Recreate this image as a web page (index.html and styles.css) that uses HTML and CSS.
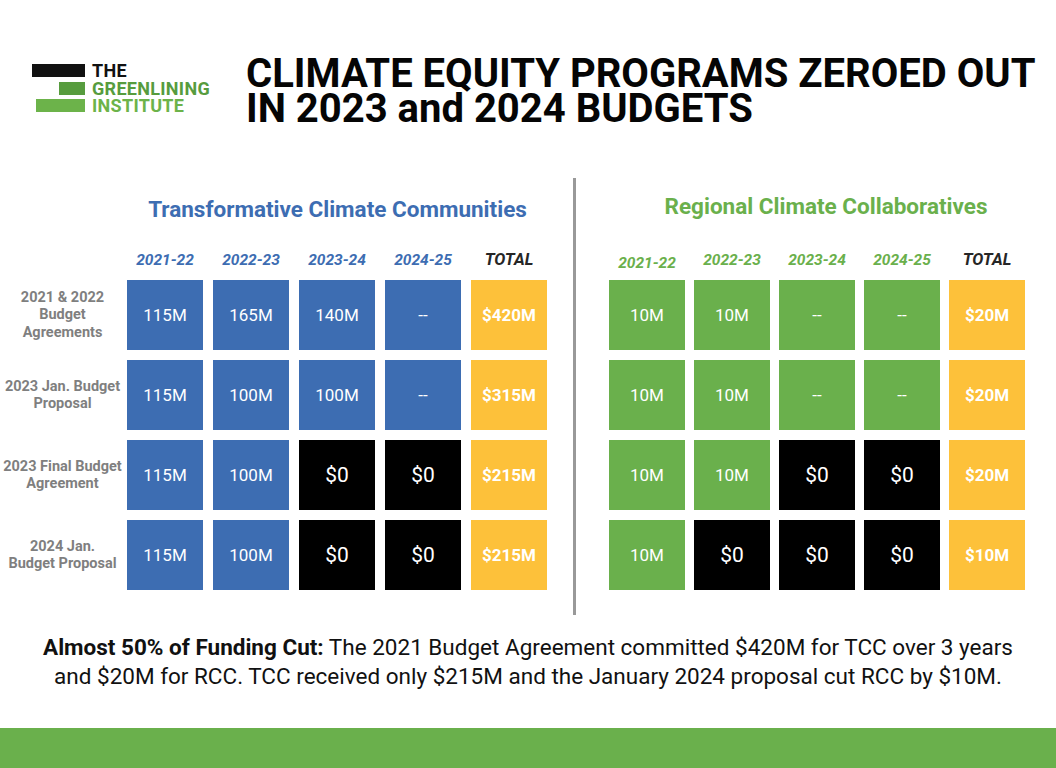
FILE: index.html
```html
<!DOCTYPE html>
<html lang="en">
<head>
<meta charset="utf-8">
<title>Climate Equity Programs Zeroed Out</title>
<link rel="stylesheet" href="styles.css">
</head>
<body>
<div class="page">
  <header class="top">
    <div class="logo">
      <div class="logo-row"><span class="logo-bar-slot"><span class="logo-bar bar-black"></span></span><span class="logo-text t-black">THE</span></div>
      <div class="logo-row"><span class="logo-bar-slot"><span class="logo-bar bar-dark"></span></span><span class="logo-text t-dark">GREENLINING</span></div>
      <div class="logo-row"><span class="logo-bar-slot"><span class="logo-bar bar-light"></span></span><span class="logo-text t-light">INSTITUTE</span></div>
    </div>
    <h1 class="title">CLIMATE EQUITY PROGRAMS ZEROED OUT<br>IN 2023 and 2024 BUDGETS</h1>
  </header>

  <main class="panels">
    <section class="panel panel-tcc">
      <h2 class="panel-title title-blue">Transformative Climate Communities</h2>
      <div class="grid grid-tcc">
        <div></div>
        <div class="colhead blue">2021-22</div>
        <div class="colhead blue">2022-23</div>
        <div class="colhead blue">2023-24</div>
        <div class="colhead blue">2024-25</div>
        <div class="colhead total">TOTAL</div>

        <div class="rowlabel">2021 &amp; 2022<br>Budget<br>Agreements</div>
        <div class="cell c-blue">115M</div>
        <div class="cell c-blue">165M</div>
        <div class="cell c-blue">140M</div>
        <div class="cell c-blue">--</div>
        <div class="cell c-yellow">$420M</div>

        <div class="rowlabel">2023 Jan. Budget<br>Proposal</div>
        <div class="cell c-blue">115M</div>
        <div class="cell c-blue">100M</div>
        <div class="cell c-blue">100M</div>
        <div class="cell c-blue">--</div>
        <div class="cell c-yellow">$315M</div>

        <div class="rowlabel">2023 Final Budget<br>Agreement</div>
        <div class="cell c-blue">115M</div>
        <div class="cell c-blue">100M</div>
        <div class="cell c-black">$0</div>
        <div class="cell c-black">$0</div>
        <div class="cell c-yellow">$215M</div>

        <div class="rowlabel">2024 Jan.<br>Budget Proposal</div>
        <div class="cell c-blue">115M</div>
        <div class="cell c-blue">100M</div>
        <div class="cell c-black">$0</div>
        <div class="cell c-black">$0</div>
        <div class="cell c-yellow">$215M</div>
      </div>
    </section>

    <div class="divider"></div>

    <section class="panel panel-rcc">
      <h2 class="panel-title title-green">Regional Climate Collaboratives</h2>
      <div class="grid grid-rcc">
        <div class="colhead green first">2021-22</div>
        <div class="colhead green">2022-23</div>
        <div class="colhead green">2023-24</div>
        <div class="colhead green">2024-25</div>
        <div class="colhead total">TOTAL</div>

        <div class="cell c-green">10M</div>
        <div class="cell c-green">10M</div>
        <div class="cell c-green">--</div>
        <div class="cell c-green">--</div>
        <div class="cell c-yellow">$20M</div>

        <div class="cell c-green">10M</div>
        <div class="cell c-green">10M</div>
        <div class="cell c-green">--</div>
        <div class="cell c-green">--</div>
        <div class="cell c-yellow">$20M</div>

        <div class="cell c-green">10M</div>
        <div class="cell c-green">10M</div>
        <div class="cell c-black">$0</div>
        <div class="cell c-black">$0</div>
        <div class="cell c-yellow">$20M</div>

        <div class="cell c-green">10M</div>
        <div class="cell c-black">$0</div>
        <div class="cell c-black">$0</div>
        <div class="cell c-black">$0</div>
        <div class="cell c-yellow">$10M</div>
      </div>
    </section>
  </main>

  <p class="note"><strong>Almost 50% of Funding Cut:</strong> The 2021 Budget Agreement committed $420M for TCC over 3 years<br>and $20M for RCC. TCC received only $215M and the January 2024 proposal cut RCC by $10M.</p>

  <footer class="footer-bar"></footer>
</div>
</body>
</html>
```

FILE: styles.css
```css
* { box-sizing: border-box; }

html, body {
  margin: 0;
  padding: 0;
  background: #ffffff;
}

body {
  font-family: Roboto, "Liberation Sans", Arial, sans-serif;
  color: #111111;
}

.page {
  width: 1056px;
  height: 768px;
  display: flex;
  flex-direction: column;
  overflow: hidden;
}

/* Header */
.top {
  display: flex;
  align-items: flex-start;
  padding: 56px 0 0 32px;
  height: 178px;
}

.logo {
  margin-top: 8px;
  width: 214px;
  display: flex;
  flex-direction: column;
  row-gap: 4px;
}

.logo-row {
  display: flex;
  align-items: center;
  height: 13.5px;
}

.logo-bar-slot {
  width: 53px;
  display: flex;
  justify-content: flex-end;
}

.logo-bar {
  display: block;
  height: 13px;
}

.bar-black { width: 53px; background: #111111; }
.bar-dark { width: 26px; background: #579c3e; }
.bar-light { width: 49px; background: #6cb34a; }

.logo-text {
  margin-left: 7px;
  font-weight: 700;
  font-size: 18px;
  line-height: 13.5px;
  letter-spacing: 0.3px;
}

.t-black { color: #111111; }
.t-dark { color: #579c3e; }
.t-light { color: #6cb34a; }

.title {
  margin: 0;
  font-size: 40px;
  line-height: 35px;
  font-weight: 700;
  color: #050505;
}

/* Panels */
.panels {
  display: flex;
  height: 437px;
}

.panel {
  padding-top: 19px;
}

.panel-tcc {
  width: 573px;
}

.panel-rcc {
  padding-left: 33px;
}

.panel-title {
  margin: 0 0 29px 0;
  font-size: 22.5px;
  line-height: 24px;
  font-weight: 700;
  text-align: center;
  white-space: nowrap;
}

.panel-tcc .panel-title {
  margin-left: 127px;
  width: 421px;
}

.panel-rcc .panel-title {
  width: 434px;
  margin-top: -3px;
  margin-bottom: 32px;
}

.title-blue { color: #3d6db2; }
.title-green { color: #6ab04c; }

.divider {
  width: 3px;
  background: #999999;
  height: 437px;
}

.grid {
  display: grid;
  grid-template-rows: 20px repeat(4, 70px);
  row-gap: 10px;
}

.grid-tcc {
  grid-template-columns: 127px 86px 86px 86px 86px 76px;
}

.grid-rcc {
  grid-template-columns: 85px 85px 85px 85px 77px;
}

.colhead {
  width: 76px;
  text-align: center;
  font-style: italic;
  font-weight: 700;
  font-size: 15.5px;
  line-height: 20px;
}

.colhead.first { padding-top: 3px; }

.colhead.blue { color: #3d6db2; }
.colhead.green { color: #6ab04c; }
.colhead.total { color: #262626; font-size: 16.5px; }

.rowlabel {
  display: flex;
  align-items: center;
  justify-content: center;
  text-align: center;
  font-weight: 700;
  font-size: 14.5px;
  line-height: 17.5px;
  color: #7f7f7f;
  padding-right: 2px;
  white-space: nowrap;
}

.cell {
  width: 76px;
  height: 70px;
  display: flex;
  align-items: center;
  justify-content: center;
  color: #ffffff;
  font-size: 17px;
}

.c-blue { background: #3d6db2; }
.c-green { background: #6ab04c; }
.c-black { background: #000000; font-size: 21px; }
.c-yellow { background: #fdc13a; font-weight: 700; }

/* Note */
.note {
  margin: 18px 0 0 0;
  text-align: center;
  font-size: 22.5px;
  line-height: 29px;
  color: #111111;
  white-space: nowrap;
}

.note strong { font-weight: 700; }

.footer-bar {
  margin-top: auto;
  height: 40px;
  background: #6ab04c;
}
```
